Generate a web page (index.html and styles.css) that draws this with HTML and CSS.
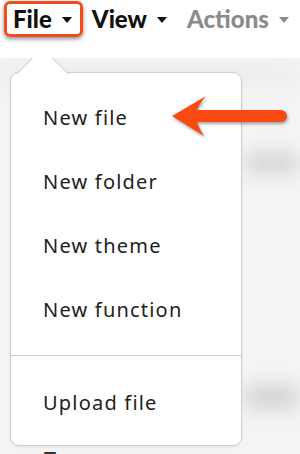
FILE: index.html
```html
<!DOCTYPE html>
<html lang="en">
<head>
    <meta charset="UTF-8">
    <meta name="viewport" content="width=device-width, initial-scale=1.0">
    <title>File menu</title>
    <link rel="stylesheet" href="styles.css">
</head>
<body>
    <div class="topbar">
        <div class="menu-item highlight">File <span class="caret"></span></div>
        <div class="menu-item">View <span class="caret"></span></div>
        <div class="menu-item muted">Actions <span class="caret"></span></div>
    </div>

    <div class="page">
        <!-- blurred content behind the dropdown -->
        <div class="blur-row row-1"></div>
        <div class="blur-row row-2"></div>
        <div class="blur-row row-3"></div>
        <div class="blur-text">T</div>

        <div class="dropdown">
            <div class="dropdown-group">
                <div class="dropdown-item">New file</div>
                <div class="dropdown-item">New folder</div>
                <div class="dropdown-item">New theme</div>
                <div class="dropdown-item">New function</div>
            </div>
            <div class="dropdown-group">
                <div class="dropdown-item">Upload file</div>
            </div>
        </div>

        <svg class="pointer" width="124" height="52" viewBox="168 92 124 52">
            <path d="M172,116 L206,96 Q199,104 197,110 L281,110 A6,6 0 0 1 281,122 L197,122 Q199,128 204,136 Z" fill="#fa4a12"/>
        </svg>
    </div>
</body>
</html>
```

FILE: styles.css
```css
* {
    margin: 0;
    padding: 0;
    box-sizing: border-box;
}
body {
    font-family: 'Lato', 'Noto Sans', sans-serif;
    background: #f4f4f4;
    color: #222;
    width: 300px;
    height: 454px;
    overflow: hidden;
}
.topbar {
    background: #fff;
    height: 58px;
    display: flex;
    align-items: flex-start;
    padding: 1px 0 0 4px;
}
.menu-item {
    display: flex;
    align-items: center;
    gap: 10px;
    font-size: 24px;
    font-weight: 900;
    color: #111;
    padding: 1px 8px 1px 6px;
    border: 3px solid transparent;
    line-height: 28px;
}
.menu-item.highlight {
    border-color: #f24c1a;
    border-radius: 6px;
    box-shadow: 0 2px 4px rgba(0, 0, 0, 0.45);
}
.menu-item.muted {
    color: #8a8a8a;
}
.caret {
    width: 0;
    height: 0;
    border-left: 5.5px solid transparent;
    border-right: 5.5px solid transparent;
    border-top: 6px solid currentColor;
    margin-top: 2px;
}
.page {
    position: relative;
    display: flow-root;
    height: 396px;
    overflow: hidden;
}
.blur-row {
    background: #d4d4d4;
    filter: blur(9px);
    border-radius: 10px;
}
.row-1 {
    height: 18px;
    margin-top: 8px;
    background: #ececec;
}
.row-2 {
    width: 56px;
    height: 20px;
    margin: 69px 0 0 244px;
}
.row-3 {
    width: 56px;
    height: 24px;
    margin: 212px 0 0 244px;
}
.blur-text {
    font-size: 20px;
    font-weight: 700;
    line-height: 20px;
    color: #333;
    padding-left: 44px;
    margin-top: 40px;
}
.dropdown {
    position: absolute;
    left: 10px;
    top: 14px;
    width: 232px;
    height: 374px;
    background: #fff;
    border: 1px solid #cfcfcf;
    border-radius: 9px;
    box-shadow: 0 1px 3px rgba(0, 0, 0, 0.08);
}
.dropdown::before {
    content: '';
    position: absolute;
    left: 13px;
    top: -18px;
    width: 36px;
    height: 36px;
    background: #fff;
    border-top: 1px solid #cfcfcf;
    border-left: 1px solid #cfcfcf;
    transform: rotate(45deg);
}
.dropdown-group {
    position: relative;
    padding: 12px 0 14px;
}
.dropdown-group + .dropdown-group {
    border-top: 1px solid #cfcfcf;
    padding: 14px 0 12px;
}
.dropdown-item {
    height: 64px;
    display: flex;
    align-items: center;
    padding-left: 32px;
    font-family: 'Noto Sans', 'Lato', sans-serif;
    font-size: 20px;
    letter-spacing: 1.2px;
    color: #222;
}
.pointer {
    position: absolute;
    left: 168px;
    top: 34px;
    filter: drop-shadow(1px 2px 1.5px rgba(0, 0, 0, 0.35));
}
```
